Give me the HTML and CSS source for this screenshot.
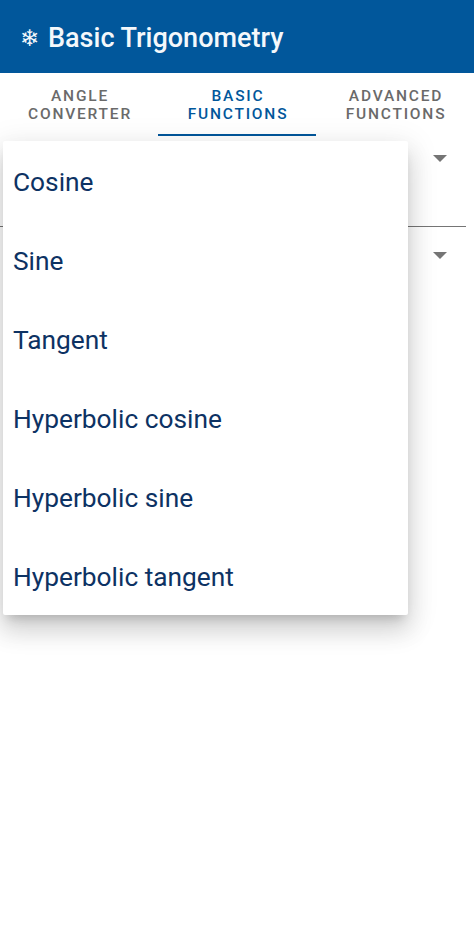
FILE: index.html
```html
<!DOCTYPE html>
<html lang="en">

<head>
    <meta charset="UTF-8">
    <title>Basic Trigonometry</title>
    <link rel="stylesheet" href="styles.css">
</head>

<body>
    <header class="app-bar">
        <span class="app-icon">❄</span>
        <span class="app-title">Basic Trigonometry</span>
    </header>

    <nav class="tabs">
        <div class="tab">ANGLE<br>CONVERTER</div>
        <div class="tab active">BASIC<br>FUNCTIONS</div>
        <div class="tab">ADVANCED<br>FUNCTIONS</div>
    </nav>

    <main class="form">
        <div class="field first"><span class="arrow"></span></div>
        <div class="field second"><span class="arrow"></span></div>

        <ul class="menu">
            <li>Cosine</li>
            <li>Sine</li>
            <li>Tangent</li>
            <li>Hyperbolic cosine</li>
            <li>Hyperbolic sine</li>
            <li>Hyperbolic tangent</li>
        </ul>
    </main>
</body>

</html>
```
FILE: styles.css
```css
* {
    padding: 0;
    margin: 0;
    box-sizing: border-box;
    list-style: none;
}

body {
    width: 474px;
    height: 950px;
    overflow: hidden;
    background: #fff;
    font-family: Roboto, "Liberation Sans", sans-serif;
}

.app-bar {
    display: flex;
    align-items: center;
    height: 73px;
    padding: 2px 0 0 20px;
    background: #01579b;
    color: #f4f8fb;
}

.app-icon {
    width: 28px;
    font-family: "DejaVu Sans", sans-serif;
    font-size: 23px;
}

.app-title {
    font-size: 27px;
    font-weight: 500;
}

.tabs {
    display: grid;
    grid-template-columns: repeat(3, 158px);
    height: 63px;
    background: #fff;
}

.tab {
    padding: 14px 0 0 2px;
    text-align: center;
    font-size: 15.5px;
    font-weight: 500;
    line-height: 18px;
    letter-spacing: 1.8px;
    color: #6a6a6a;
}

.active {
    color: #01579b;
    border-bottom: 2px solid #01579b;
}

.form {
    position: relative;
    height: 814px;
    padding-right: 8px;
}

.field {
    display: flex;
    justify-content: flex-end;
    padding-right: 19px;
}

.first {
    height: 91px;
    padding-top: 19px;
    border-bottom: 1px solid #757575;
}

.second {
    padding-top: 25px;
}

.arrow {
    width: 0;
    height: 0;
    border-left: 7px solid transparent;
    border-right: 7px solid transparent;
    border-top: 7px solid #757575;
}

.menu {
    position: absolute;
    top: 5px;
    left: 3px;
    width: 405px;
    background: #fff;
    border-radius: 2px;
    box-shadow: 0 16px 24px 2px rgba(0, 0, 0, .12), 0 6px 30px 5px rgba(0, 0, 0, .08), 0 8px 10px -5px rgba(0, 0, 0, .18);
}

.menu li {
    display: flex;
    align-items: center;
    height: 79px;
    padding: 3px 0 0 10px;
    font-size: 26.3px;
    color: #0d3263;
}
```
